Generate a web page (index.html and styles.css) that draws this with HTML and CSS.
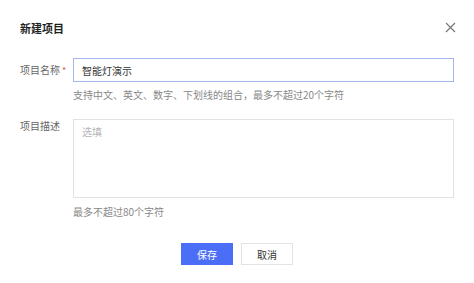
FILE: index.html
```html
<!DOCTYPE html>
<html>
  <head>
    <title>新建项目</title>
    <link rel="stylesheet" href="styles.css">
  </head>
  <body>
    <div class="dialog">
      <div class="header">
        <span class="title">新建项目</span>
        <span class="close">
          <svg width="11" height="11" viewBox="0 0 11 11"><path d="M1 1L10 10M10 1L1 10" stroke="#777" stroke-width="1.2" fill="none"/></svg>
        </span>
      </div>
      <div class="row">
        <label class="label">项目名称<span class="req">*</span></label>
        <div class="field">
          <input class="input" type="text" value="智能灯演示">
          <div class="hint">支持中文、英文、数字、下划线的组合，最多不超过20个字符</div>
        </div>
      </div>
      <div class="row row-desc">
        <label class="label label-top">项目描述</label>
        <div class="field">
          <textarea class="textarea" placeholder="选填"></textarea>
          <div class="hint">最多不超过80个字符</div>
        </div>
      </div>
      <div class="footer">
        <button class="btn btn-primary">保存</button>
        <button class="btn">取消</button>
      </div>
    </div>
  </body>
</html>
```

FILE: styles.css
```css
html, body {
  margin: 0px;
  padding: 0px;
  background: #fff;
}
body {
  font-family: "Noto Sans CJK SC", "Noto Sans", sans-serif;
  font-size: 10px;
  color: #333;
}
.dialog {
  padding: 0px 20px 0px 20px;
}
.header {
  display: flex;
  align-items: center;
  justify-content: space-between;
  padding-top: 18px;
  height: 20px;
}
.title {
  font-size: 11px;
  font-weight: bold;
  color: #1f1f1f;
  line-height: 20px;
}
.close {
  display: flex;
  margin-right: -2px;
  margin-top: -2px;
}
.row {
  display: flex;
  margin-top: 20px;
}
.row-desc {
  margin-top: 17px;
}
.label {
  width: 53px;
  flex: none;
  color: #666;
  line-height: 24px;
}
.label-top {
  line-height: 13px;
}
.req {
  color: #e05a5a;
  margin-left: 2px;
  font-size: 9px;
}
.field {
  flex: 1;
}
.input {
  display: block;
  width: 100%;
  height: 24px;
  box-sizing: border-box;
  border: 1px solid #a8b8ef;
  padding: 0px 8px;
  margin: 0px;
  font-family: inherit;
  font-size: 10px;
  color: #333;
  outline: none;
}
.textarea {
  display: block;
  width: 100%;
  height: 79px;
  box-sizing: border-box;
  border: 1px solid #e2e2e2;
  padding: 5px 8px;
  margin: 0px;
  font-family: inherit;
  font-size: 10px;
  line-height: 14px;
  resize: none;
  outline: none;
}
.textarea::placeholder {
  color: #b5b5b5;
}
.hint {
  margin-top: 6px;
  line-height: 14px;
  color: #888;
}
.row-desc .hint {
  margin-top: 7px;
}
.footer {
  display: flex;
  justify-content: center;
  gap: 8px;
  margin-top: 24px;
}
.btn {
  width: 52px;
  height: 22px;
  box-sizing: border-box;
  border: 1px solid #e3e3e3;
  background: #fff;
  color: #333;
  font-family: inherit;
  font-size: 10px;
  padding: 0px;
  cursor: pointer;
}
.btn-primary {
  background: #4a6ff6;
  border-color: #4a6ff6;
  color: #fff;
}
```
